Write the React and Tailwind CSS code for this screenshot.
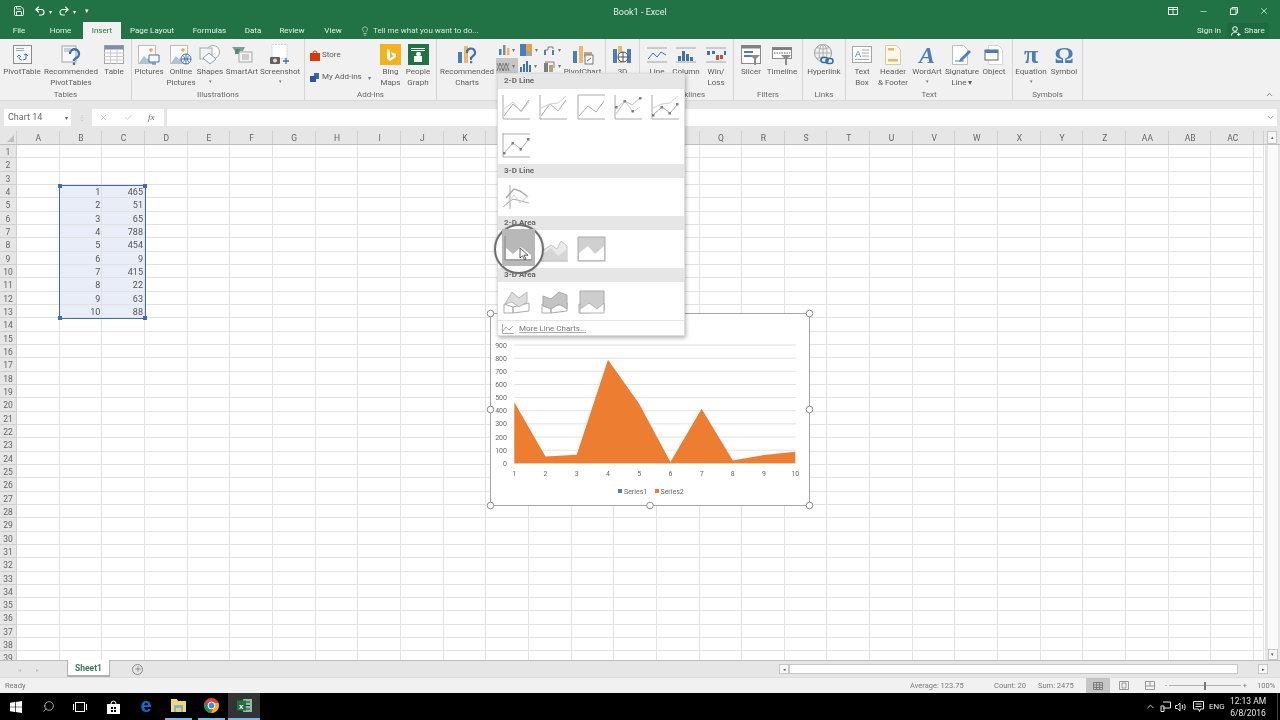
import { Save, Undo2, Redo2, Lightbulb, X, Check, ChevronUp, ChevronDown, Minus, Search, Plus } from "lucide-react";

const columns = ["A","B","C","D","E","F","G","H","I","J","K","L","M","N","O","P","Q","R","S","T","U","V","W","X","Y","Z","AA","AB","AC"];
const sheetData = { 4:[1,465], 5:[2,51], 6:[3,65], 7:[4,788], 8:[5,454], 9:[6,9], 10:[7,415], 11:[8,22], 12:[9,63], 13:[10,88] };
const chartValues = [465,51,65,788,454,9,415,22,63,88];

const Svg = ({ w = 24, h = 24, children }) => (
  <svg width={w} height={h} viewBox={`0 0 ${w} ${h}`} fill="none">{children}</svg>
);

// ribbon icons
const PivotIcon = () => (
  <Svg w={19} h={19}>
    <rect x="0.5" y="0.5" width="18" height="18" fill="#f7f7f7" stroke="#8c8c8c" />
    <path d="M3 3.500h8M3 5.500h8" stroke="#a6a6a6" />
    <path d="M9 15h-1a3 3 0 0 1-2-3M6 10l-2 2M6 10l2 2M10 15l3-1v-5l-2 1M13 9l2 2" stroke="#3b6fa8" />
  </Svg>
);
const RecPivotIcon = () => (
  <Svg w={20} h={20}>
    <rect x="1" y="1" width="14" height="16" fill="#f7f7f7" stroke="#a6a6a6" />
    <path d="M3 4h7M3 6h7" stroke="#a6a6a6" />
    <path d="M9 9a4.5 4.5 0 1 1 6 4l-2 2v1" stroke="#3f73ae" strokeWidth="2.4" />
    <rect x="11.8" y="17.5" width="2.4" height="2.4" fill="#3f73ae" />
  </Svg>
);
const TableIcon = () => (
  <Svg w={20} h={19}>
    <rect x="0.5" y="0.5" width="19" height="18" fill="#fbfbfb" stroke="#a6a6a6" />
    <rect x="0.5" y="0.5" width="19" height="4" fill="#7f8fa9" />
    <path d="M0 8h20M0 11.5h20M0 15h20M6.500 4v15M13 4v15" stroke="#c9c9c9" />
  </Svg>
);
const PictureIcon = ({ globe, monitor }) => (
  <Svg w={22} h={20}>
    <rect x="0.5" y="0.5" width="17" height="18" fill="#fbfbfb" stroke="#bdbdbd" />
    <circle cx="13" cy="5" r="1.8" fill="#eda64a" />
    <path d="M1 18l5-7 3 3 3-2 5 6z" fill="#a9c3de" />
    {monitor && <path d="M11 10h10v7H11zM14 19h4" stroke="#3f73ae" fill="#fff" />}
    {globe && (
      <g stroke="#3f73ae" fill="#fff">
        <circle cx="16" cy="14" r="5" />
        <path d="M11 14h10M16 9v10M13 10.500c2 2 2 5 0 7M19 10.500c-2 2-2 5 0 7" fill="none" />
      </g>
    )}
  </Svg>
);
const ShapesIcon = () => (
  <Svg w={22} h={20}>
    <circle cx="14" cy="7" r="6.5" fill="#fbfbfb" stroke="#a6a6a6" />
    <rect x="1" y="3" width="12" height="11" fill="#f2f2f2" stroke="#a6a6a6" />
    <path d="M10 8l7 6-6 5-7-6z" fill="#fff" stroke="#7d9cbd" />
  </Svg>
);
const SmartArtIcon = () => (
  <Svg w={22} h={18}>
    <path d="M1 1h13l-2 4H4z" fill="#7b9f95" />
    <path d="M4 3h5v5H4z" fill="#5d8478" />
    <rect x="8" y="6" width="13" height="10" fill="#f4f4f4" stroke="#a6a6a6" />
    <path d="M11 9h7M11 11h7M11 13h7" stroke="#a6a6a6" />
  </Svg>
);
const ScreenshotIcon = () => (
  <Svg w={22} h={22}>
    <rect x="3" y="0.5" width="15" height="14" fill="#fff" stroke="#d0d0d0" strokeDasharray="2 1" />
    <rect x="1" y="13" width="10" height="7" rx="1" fill="#5f5f5f" />
    <circle cx="6" cy="16.5" r="2" fill="#dcdcdc" />
    <path d="M17 14v6M14 17h6" stroke="#3f73ae" strokeWidth="1.3" />
  </Svg>
);
const RecChartIcon = () => (
  <Svg w={20} h={20}>
    <rect x="1" y="7" width="4" height="11" fill="#4a7ebb" />
    <rect x="7" y="1" width="4" height="17" fill="#eab96a" />
    <path d="M10 8a4 4 0 1 1 6 3l-2 2v2" stroke="#3f73ae" strokeWidth="2.2" />
    <rect x="13" y="16" width="2.2" height="2.2" fill="#3f73ae" />
  </Svg>
);
const PivotChartIcon = () => (
  <Svg w={22} h={22}>
    <rect x="1" y="7" width="4" height="12" fill="#4a7ebb" />
    <rect x="7" y="2" width="4" height="17" fill="#eab96a" />
    <rect x="12" y="8" width="8" height="5" fill="#b9a98c" />
    <rect x="13" y="11" width="8" height="9" fill="#f7f7f7" stroke="#7a7a7a" />
    <path d="M15 17l4-3" stroke="#3f73ae" />
  </Svg>
);
const MapIcon = () => (
  <Svg w={21} h={20}>
    <rect x="1" y="4" width="4" height="14" fill="#4a7ebb" />
    <rect x="6" y="1" width="4" height="17" fill="#eab96a" />
    <rect x="15" y="4" width="4" height="14" fill="#4a7ebb" />
    <circle cx="11" cy="12" r="5" fill="#fff" stroke="#4d4d4d" />
    <path d="M6 12h10M11 7v10" stroke="#4d4d4d" />
  </Svg>
);
const SparkIcon = ({ type }) => (
  <Svg w={20} h={16}>
    <path d="M0 1h20M0 15h20" stroke="#a6a6a6" />
    {type === "line" && <path d="M1 12l5-6 4 4 4-5 5 3" stroke="#3f73ae" />}
    {type === "column" && (
      <g fill="#3f73ae">
        <rect x="2" y="9" width="3" height="5" />
        <rect x="6" y="4" width="3" height="10" />
        <rect x="10" y="7" width="3" height="7" />
        <rect x="14" y="10" width="3" height="4" />
      </g>
    )}
    {type === "win" && (
      <g>
        <rect x="1" y="4" width="3" height="4" fill="#3f73ae" />
        <rect x="6" y="4" width="3" height="3" fill="#3f73ae" />
        <rect x="10" y="8" width="3" height="5" fill="#c0504d" />
        <rect x="14" y="8" width="3" height="4" fill="#c0504d" />
        <rect x="18" y="4" width="2" height="4" fill="#3f73ae" />
      </g>
    )}
  </Svg>
);
const SlicerIcon = () => (
  <Svg w={20} h={20}>
    <rect x="0.5" y="0.5" width="19" height="18" fill="#fff" stroke="#8c8c8c" />
    <rect x="0.5" y="0.5" width="19" height="3" fill="#7f7f7f" />
    <rect x="3" y="6" width="9" height="2" fill="#4a7ebb" />
    <rect x="3" y="10" width="9" height="2" fill="#4a7ebb" />
    <path d="M9 10h10l-4 4v6h-2v-6z" fill="#8c8c8c" />
  </Svg>
);
const TimelineIcon = () => (
  <Svg w={20} h={20}>
    <rect x="0.5" y="2.5" width="19" height="11" fill="#fff" stroke="#8c8c8c" />
    <rect x="0.5" y="2.5" width="19" height="2.5" fill="#7f7f7f" />
    <path d="M2 8h16" stroke="#555" strokeDasharray="1.5 1" />
    <path d="M9 10h10l-4 4v6h-2v-6z" fill="#8c8c8c" />
  </Svg>
);
const HyperlinkIcon = () => (
  <Svg w={22} h={22}>
    <circle cx="10" cy="9" r="8.5" stroke="#9a9a9a" />
    <path d="M1.500 9h17M10 .5v17M4 3.500c4 2 8 2 12 0M4 14.500c4-2 8-2 12 0" stroke="#b0b0b0" />
    <ellipse cx="10" cy="9" rx="4" ry="8.5" stroke="#b0b0b0" />
    <rect x="8" y="13.5" width="7" height="5" rx="2.5" stroke="#2f6db0" strokeWidth="1.5" fill="#f1f1f1" />
    <rect x="13" y="14.5" width="7" height="5" rx="2.5" stroke="#2f6db0" strokeWidth="1.5" />
  </Svg>
);
const TextBoxIcon = () => (
  <Svg w={20} h={18}>
    <rect x="0.5" y="0.5" width="19" height="16" fill="#fff" stroke="#a6a6a6" />
    <text x="3" y="11" fontSize="9" fontFamily="Liberation Sans, sans-serif" fill="#3f73ae">A</text>
    <path d="M10 4h7M10 7h7M10 10h7M3 13.500h14" stroke="#a6a6a6" />
  </Svg>
);
const HeaderIcon = () => (
  <Svg w={16} h={20}>
    <path d="M.5.500h11l4 4v15H.5z" fill="#fdf8ea" stroke="#d8c9a3" />
    <rect x="3" y="3" width="6" height="2.5" fill="#e8b662" />
    <rect x="3" y="14" width="10" height="2.5" fill="#e8b662" />
  </Svg>
);
const SignatureIcon = () => (
  <Svg w={20} h={20}>
    <path d="M.5.500h11l4 4v15H.5z" fill="#fff" stroke="#bdbdbd" />
    <path d="M3 16h9" stroke="#5d7fa8" />
    <path d="M8 14l9-9 2 2-9 9-3 1z" fill="#4f7fb5" />
  </Svg>
);
const ObjectIcon = () => (
  <Svg w={20} h={20}>
    <path d="M4.500.500h10l4 4v15h-14z" fill="#fff" stroke="#d5d5d5" />
    <rect x="1" y="5" width="13" height="10" fill="#fff" stroke="#666" />
    <rect x="1" y="5" width="13" height="3" fill="#4a7ebb" />
  </Svg>
);

const RibbonBtn = ({ className, icon, label, second, arrow }) => (
  <div className={`${className} flex flex-col items-center shrink-0`}>
    <div className="h-[25px] flex items-center justify-center">{icon}</div>
    <div className="text-center whitespace-nowrap leading-[10.5px]">{label}</div>
    {second && <div className="text-center whitespace-nowrap leading-[10.5px]">{second}</div>}
    {arrow && <div className="text-[5px] leading-[7px] text-[#777]">▾</div>}
  </div>
);

const Group = ({ className, label, children }) => (
  <div className={`${className} h-full shrink-0 flex flex-col border-r border-[#d6d6d6]`}>
    <div className="h-[51px] flex pt-[3px]">{children}</div>
    <div className="text-center text-[8px] leading-[10px] text-[#6a6a6a] whitespace-nowrap">{label}</div>
  </div>
);

const Caret = () => <span className="text-[6px] text-[#777] leading-none ml-[2px]">▾</span>;

function MiniCharts() {
  return (
    <div className="w-[68px] shrink-0 grid grid-cols-3 grid-rows-2 h-[32px] gap-x-[2px]">
      <div className="flex items-center pl-[2px]">
        <Svg w={11} h={10}><rect x="0" y="4" width="2.5" height="6" fill="#4a7ebb" /><rect x="4" y="0" width="2.5" height="10" fill="#8c8c8c" /><rect x="8" y="3" width="2.5" height="7" fill="#eab96a" /></Svg><Caret />
      </div>
      <div className="flex items-center">
        <Svg w={13} h={12}><rect x="0" y="0" width="6" height="12" fill="#4a7ebb" /><rect x="6" y="0" width="6" height="7" fill="#e8a33d" /><rect x="6" y="7" width="6" height="5" fill="#a6a6a6" /></Svg><Caret />
      </div>
      <div className="flex items-center">
        <Svg w={12} h={11}><path d="M1 10V5h3V2h5v2" stroke="#7f7f7f" /><path d="M9 5v5" stroke="#4a7ebb" strokeWidth="2" /><rect x="0" y="5" width="2" height="5" fill="#4a7ebb" /></Svg><Caret />
      </div>
      <div className="flex items-center bg-[#c6c6c6] -ml-[1px] w-[22px]">
        <Svg w={14} h={12}><path d="M1 11l3-8 3 8 3-8 3 8" stroke="#6f6f6f" /><path d="M1 3l3 8 3-8 3 8 3-8" stroke="#8c8c8c" /></Svg><Caret />
      </div>
      <div className="flex items-center">
        <Svg w={12} h={11}><rect x="0" y="6" width="2" height="5" fill="#3f73ae" /><rect x="3" y="3" width="2" height="8" fill="#3f73ae" /><rect x="6" y="0" width="2" height="11" fill="#3f73ae" /><rect x="9" y="4" width="2" height="7" fill="#3f73ae" /></Svg><Caret />
      </div>
      <div className="flex items-center">
        <Svg w={12} h={12}><rect x="0" y="3" width="4" height="9" fill="#7f7f7f" /><rect x="5" y="5" width="4" height="7" fill="#b3a27d" /><path d="M1 2h9v6" stroke="#7f7f7f" /></Svg><Caret />
      </div>
    </div>
  );
}

function TitleBar() {
  return (
    <div className="h-[22px] shrink-0 bg-[#217346] flex items-center text-white relative">
      <Save size={12} className="ml-[13px]" strokeWidth={1.8} />
      <Undo2 size={12} className="ml-[9px]" strokeWidth={2.2} />
      <span className="text-[6px] ml-[3px]">▾</span>
      <Redo2 size={12} className="ml-[6px] opacity-90" strokeWidth={2.2} />
      <span className="text-[6px] ml-[3px]">▾</span>
      <span className="text-[7px] ml-[9px] leading-none">▾</span>
      <div className="absolute inset-x-0 top-[6px] text-center text-[9px] leading-[12px] text-[#e4efe9]">Book1 - Excel</div>
      <div className="flex-1" />
      <svg width="10" height="8" viewBox="0 0 10 8" className="mr-[21px]" fill="none"><rect x=".5" y=".5" width="9" height="7" stroke="#e6f0ea" /><path d="M5 1v6M.5 2.500h9" stroke="#e6f0ea" /></svg>
      <Minus size={9} className="mr-[22px] text-[#cfe2d7]" />
      <svg width="8" height="8" viewBox="0 0 8 8" className="mr-[21px]" fill="none"><rect x=".5" y="2" width="5.5" height="5.5" stroke="#e6f0ea" /><path d="M2 2V.5h5.500V6H6" stroke="#e6f0ea" /></svg>
      <X size={10} className="mr-[11px] text-[#cfe2d7]" />
    </div>
  );
}

function Tabs() {
  return (
    <div className="h-[17px] shrink-0 bg-[#217346] flex items-stretch text-[8px] text-[#e6f0ea]">
      <div className="w-[38px] flex items-center justify-center pt-[1px]">File</div>
      <div className="w-[45px] flex items-center justify-center pt-[1px]">Home</div>
      <div className="w-[38px] flex items-center justify-center pt-[1px] bg-[#f1f1f1] text-[#217346]">Insert</div>
      <div className="w-[62px] flex items-center justify-center pt-[1px]">Page Layout</div>
      <div className="w-[53px] flex items-center justify-center pt-[1px]">Formulas</div>
      <div className="w-[34px] flex items-center justify-center pt-[1px]">Data</div>
      <div className="w-[44px] flex items-center justify-center pt-[1px]">Review</div>
      <div className="w-[38px] flex items-center justify-center pt-[1px]">View</div>
      <div className="flex items-center ml-[8px] pt-[1px] text-[#d7e6dd]">
        <Lightbulb size={10} strokeWidth={1.5} />
        <span className="ml-[3px]">Tell me what you want to do...</span>
      </div>
      <div className="flex-1" />
      <div className="flex items-center pr-[6px] pt-[1px]">Sign in</div>
      <div className="w-[42px] mr-[11px] flex items-center justify-center bg-[#1e6b40] my-[1px]">
        <svg width="10" height="10" viewBox="0 0 10 10" fill="none" stroke="#fff"><circle cx="4" cy="3" r="2.3" /><path d="M.5 9.500c0-2 1.500-3.500 3.500-3.500s2 .5 2.500 1M6 8.500h3.500M7.700 6.800v3.400" /></svg>
        <span className="ml-[3px]">Share</span>
      </div>
    </div>
  );
}

function Ribbon() {
  return (
    <div className="h-[62px] shrink-0 bg-[#f1f1f1] border-b border-[#d9d9d9] flex text-[8px] text-[#5c5c5c] relative">
      <Group className="w-[132px]" label="Tables">
        <div className="w-[2px]" />
        <RibbonBtn className="w-[40px]" icon={<PivotIcon />} label="PivotTable" />
        <RibbonBtn className="w-[58px]" icon={<RecPivotIcon />} label="Recommended" second="PivotTables" />
        <RibbonBtn className="w-[28px]" icon={<TableIcon />} label="Table" />
      </Group>
      <Group className="w-[173px]" label="Illustrations">
        <div className="w-[1px]" />
        <RibbonBtn className="w-[32px]" icon={<PictureIcon monitor />} label="Pictures" />
        <RibbonBtn className="w-[32px]" icon={<PictureIcon globe />} label="Online" second="Pictures" />
        <RibbonBtn className="w-[26px]" icon={<ShapesIcon />} label="Shapes" arrow />
        <RibbonBtn className="w-[38px]" icon={<SmartArtIcon />} label="SmartArt" />
        <RibbonBtn className="w-[38px]" icon={<ScreenshotIcon />} label="Screenshot" arrow />
      </Group>
      <Group className="w-[132px]" label="Add-ins">
        <div className="w-[73px] shrink-0 flex flex-col pl-[5px] pt-[7px] gap-[10px] text-[8px]">
          <div className="flex items-center">
            <svg width="10" height="11" viewBox="0 0 10 11"><rect y="3" width="10" height="8" fill="#d83b01" /><path d="M3 3a2 2 0 0 1 4 0" stroke="#d83b01" fill="none" /></svg>
            <span className="ml-[2px]">Store</span>
          </div>
          <div className="flex items-center">
            <svg width="10" height="10" viewBox="0 0 10 10"><path d="M0 4h6v6H0z" fill="#2b579a" /><path d="M4 1h5v6H6V4H4z" fill="#2f6db0" /></svg>
            <span className="ml-[2px]">My Add-ins</span>
            <span className="ml-[6px] text-[6px] text-[#777]">▾</span>
          </div>
        </div>
        <RibbonBtn className="w-[25px]" icon={<div className="w-[21px] h-[21px] bg-[#f4b21d] flex items-center justify-center"><svg width="10" height="14" viewBox="0 0 10 14"><path d="M1 1l3 1v8l4-2-2-1-1-3 5 2v3l-6 4-3-2z" fill="#fff" /></svg></div>} label="Bing" second="Maps" />
        <RibbonBtn className="w-[30px]" icon={<div className="w-[21px] h-[21px] bg-[#217346] flex flex-col items-center justify-center"><div className="w-[14px] h-[1px] bg-white mb-[1px]" /><div className="w-[14px] h-[1px] bg-white mb-[1px]" /><div className="w-[5px] h-[4px] rounded-full bg-white" /><div className="w-[8px] h-[6px] bg-white" /></div>} label="People" second="Graph" />
      </Group>
      <Group className="w-[169px]" label="Charts">
        <RibbonBtn className="w-[60px]" icon={<RecChartIcon />} label="Recommended" second="Charts" />
        <MiniCharts />
        <RibbonBtn className="w-[35px]" icon={<PivotChartIcon />} label="PivotChart" arrow />
      </Group>
      <Group className="w-[34px]" label="Tours">
        <RibbonBtn className="w-[33px]" icon={<MapIcon />} label="3D" second="Map" />
      </Group>
      <Group className="w-[94px]" label="Sparklines">
        <div className="w-[3px]" />
        <RibbonBtn className="w-[28px]" icon={<SparkIcon type="line" />} label="Line" />
        <RibbonBtn className="w-[30px]" icon={<SparkIcon type="column" />} label="Column" />
        <RibbonBtn className="w-[30px]" icon={<SparkIcon type="win" />} label="Win/" second="Loss" />
      </Group>
      <Group className="w-[69px]" label="Filters">
        <div className="w-[1px]" />
        <RibbonBtn className="w-[32px]" icon={<SlicerIcon />} label="Slicer" />
        <RibbonBtn className="w-[30px]" icon={<TimelineIcon />} label="Timeline" />
      </Group>
      <Group className="w-[43px]" label="Links">
        <RibbonBtn className="w-[42px]" icon={<HyperlinkIcon />} label="Hyperlink" />
      </Group>
      <Group className="w-[167px]" label="Text">
        <div className="w-[2px]" />
        <RibbonBtn className="w-[28px]" icon={<TextBoxIcon />} label="Text" second="Box" />
        <RibbonBtn className="w-[34px]" icon={<HeaderIcon />} label="Header" second="& Footer" />
        <RibbonBtn className="w-[34px]" icon={<span className="text-[24px] leading-none italic font-bold text-[#4a7ebb] [font-family:'Liberation_Serif',serif]">A</span>} label="WordArt" arrow />
        <RibbonBtn className="w-[36px]" icon={<SignatureIcon />} label="Signature" second="Line ▾" />
        <RibbonBtn className="w-[28px]" icon={<ObjectIcon />} label="Object" />
      </Group>
      <Group className="w-[70px]" label="Symbols">
        <div className="w-[1px]" />
        <RibbonBtn className="w-[34px]" icon={<span className="text-[26px] leading-none font-bold text-[#4a7ebb] [font-family:'Liberation_Serif',serif]">π</span>} label="Equation" arrow />
        <RibbonBtn className="w-[32px]" icon={<span className="text-[24px] leading-none font-bold text-[#4a7ebb] [font-family:'Liberation_Serif',serif]">Ω</span>} label="Symbol" />
      </Group>
      <ChevronUp size={9} className="absolute right-[6px] bottom-[1px] text-[#666]" />
    </div>
  );
}

function FormulaBar() {
  return (
    <div className="h-[30px] shrink-0 bg-[#e6e6e6] flex items-center text-[9px] text-[#666] pt-[3px]">
      <div className="w-[67px] h-[17px] ml-[4px] bg-white flex items-center pl-[4px] justify-between pr-[3px]">
        Chart 14
        <span className="text-[6px]">▾</span>
      </div>
      <div className="w-[21px] text-center text-[#bbb] text-[8px]">⋮</div>
      <div className="w-[72px] h-[17px] bg-white flex items-center text-[#bdbdbd]">
        <X size={9} className="ml-[7px]" />
        <Check size={9} className="ml-[16px]" />
        <span className="ml-[15px] italic text-[#666] [font-family:'Liberation_Serif',serif]">fx</span>
      </div>
      <div className="flex-1 h-[17px] ml-[3px] mr-[3px] bg-white flex items-center justify-end pr-[2px]">
        <ChevronDown size={9} className="text-[#777]" />
      </div>
    </div>
  );
}

function ColumnHeaders() {
  return (
    <div className="h-[14px] shrink-0 flex bg-[#e6e6e6] border-b border-[#bfbfbf] text-[8.5px] text-[#666] leading-[15px]">
      <div className="w-[17px] shrink-0 border-r border-[#cfcfcf] relative">
        <div className="absolute right-[2px] bottom-[2px] w-0 h-0 border-l-[7px] border-l-transparent border-b-[7px] border-b-[#bfbfbf]" />
      </div>
      {columns.map((c) => (
        <div key={c} className="w-[42.67px] shrink-0 text-center pl-[1px] border-r border-[#cfcfcf]">{c}</div>
      ))}
      <div className="w-[10px] shrink-0 border-r border-[#cfcfcf]" />
      <div className="flex-1 bg-[#e6e6e6] flex justify-center">
        <div className="w-[10px] h-[13px] bg-[#f7f7f7] border border-[#c6c6c6] text-[5px] text-center leading-[11px]">▴</div>
      </div>
    </div>
  );
}

function Grid() {
  const rows = Array.from({ length: 39 }, (_, i) => i + 1);
  return (
    <div className="flex-1 min-h-0 flex overflow-hidden">
      <div className="relative overflow-hidden w-[1265px] shrink-0 bg-white">
        {rows.map((r) => (
          <div key={r} className="h-[13.33px] flex text-[9px] text-[#555] leading-[14.5px]">
            <div className="w-[17px] shrink-0 bg-[#e6e6e6] border-r border-b border-[#cfcfcf] text-center text-[8.5px] text-[#666]">{r}</div>
            {columns.map((c) => (
              <div
                key={c}
                className={`w-[42.67px] shrink-0 border-r border-b border-[#e2e2e2] text-right pr-[1px] ${sheetData[r] && (c === "B" || c === "C") ? "bg-[#e9edf7]" : ""}`}
              >
                {sheetData[r] && c === "B" && sheetData[r][0]}
                {sheetData[r] && c === "C" && sheetData[r][1]}
              </div>
            ))}
            <div className="w-[10px] shrink-0 border-r border-b border-[#e2e2e2]" />
          </div>
        ))}
        {/* chart source range */}
        <div className="absolute left-[59px] top-[40px] w-[86.5px] h-[133.5px] border-[1.5px] border-[#3f6cb0]">
          <div className="absolute -left-[2.5px] -top-[2.5px] w-[4px] h-[4px] bg-[#3f6cb0]" />
          <div className="absolute -right-[2.5px] -top-[2.5px] w-[4px] h-[4px] bg-[#3f6cb0]" />
          <div className="absolute -left-[2.5px] -bottom-[2.5px] w-[4px] h-[4px] bg-[#3f6cb0]" />
          <div className="absolute -right-[2.5px] -bottom-[2.5px] w-[4px] h-[4px] bg-[#3f6cb0]" />
        </div>
      </div>
      <div className="flex-1 bg-[#e6e6e6] flex flex-col items-center">
        <div className="w-[10px] flex-1 bg-[#fbfbfb]" />
        <div className="w-[10px] h-[11px] bg-[#f7f7f7] border border-[#c6c6c6] text-[5px] text-center leading-[9px] text-[#555]">▾</div>
      </div>
    </div>
  );
}

function ChartObject() {
  const x = (i) => 24.3 + i * 31.22;
  const y = (v) => 150.3 - v * 0.1314;
  const points = chartValues.map((v, i) => `${x(i)},${y(v)}`).join(" ");
  const ticks = [0, 100, 200, 300, 400, 500, 600, 700, 800, 900];
  const handles = [[0, 0], [319, 0], [0, 96], [319, 96], [0, 192], [159.5, 192], [319, 192]];
  return (
    <div className="absolute left-[490px] top-[313px] w-[320px] h-[193px]">
      <svg width="320" height="193" viewBox="0 0 320 193" className="absolute inset-0 overflow-visible">
        <rect x="0.5" y="0.5" width="319" height="192" fill="#fff" stroke="#a6a6a6" />
        {ticks.map((t) => (
          <g key={t}>
            <line x1="24" x2="306" y1={y(t)} y2={y(t)} stroke="#e2e2e2" />
            <text x="17" y={y(t) + 2.5} textAnchor="end" fontSize="7" fill="#666" fontFamily="Roboto, sans-serif">{t}</text>
          </g>
        ))}
        <polygon points={`${x(0)},${y(0)} ${points} ${x(9)},${y(0)}`} fill="#ed7d31" />
        {chartValues.map((_, i) => (
          <text key={i} x={x(i)} y="162.5" textAnchor="middle" fontSize="7" fill="#666" fontFamily="Roboto, sans-serif">{i + 1}</text>
        ))}
        <rect x="128" y="176" width="4" height="4" fill="#5b7fa8" />
        <text x="134" y="180.5" fontSize="7" fill="#666" fontFamily="Roboto, sans-serif">Series1</text>
        <rect x="165" y="176" width="4" height="4" fill="#ed7d31" />
        <text x="170.5" y="180.5" fontSize="7" fill="#666" fontFamily="Roboto, sans-serif">Series2</text>
        {handles.map(([hx, hy]) => (
          <circle key={`${hx}-${hy}`} cx={hx + 0.5} cy={hy + 0.5} r="3.3" fill="#fff" stroke="#8c8c8c" />
        ))}
      </svg>
    </div>
  );
}

const Axis = () => <path d="M1 1v24h27" stroke="#ababab" />;
const LINE_A = "M2 22l9-12 8 7 8-11";
const LINE_B = "M2 14l9 -4 8 -1 8 -7";

const lineIcons = [
  <><Axis /><path d="M2 22l9-12 8 7 8-11" stroke="#ababab" /><path d="M2 15l9-7 8 10 8-10" stroke="#cfcfcf" /></>,
  <><Axis /><path d={LINE_A} stroke="#ababab" /><path d={LINE_B} stroke="#cfcfcf" /></>,
  <><path d="M1 1h27" stroke="#ababab" /><Axis /><path d="M2 22l9-10 8 6 8-11" stroke="#ababab" /></>,
  <><Axis /><path d="M2 20l9-13 7 4 8-7" stroke="#bbb" /><path d="M2 14l9 -7 8 11 7-5" stroke="#cfcfcf" /><g fill="#808080"><rect x="1" y="12" width="2.5" height="2.5" /><rect x="9.5" y="6" width="2.5" height="2.5" /><rect x="17.5" y="16" width="2.5" height="2.5" /><rect x="25" y="3" width="2.5" height="2.5" /></g></>,
  <><Axis /><path d={LINE_B} stroke="#cfcfcf" /><path d="M2 21l9-8 8 6 8-9" stroke="#ababab" /><g fill="#808080"><rect x="1" y="20" width="2.5" height="2.5" /><rect x="9.5" y="12" width="2.5" height="2.5" /><rect x="17.5" y="18" width="2.5" height="2.5" /><rect x="25" y="9" width="2.5" height="2.5" /></g></>,
];
const markerTop = (
  <><path d="M1 2h27" stroke="#ababab" /><Axis /><path d="M2 21l9-10 8 6 8-10" stroke="#ababab" /><g fill="#808080"><rect x="1" y="20" width="2.5" height="2.5" /><rect x="9.5" y="10" width="2.5" height="2.5" /><rect x="17.5" y="16" width="2.5" height="2.5" /><rect x="25" y="6" width="2.5" height="2.5" /></g></>
);
const line3d = (
  <><path d="M8 1v24M1 23l10-8 16 4" stroke="#ababab" /><path d="M4 14l8-9 6 2 8 6" stroke="#ababab" strokeWidth="1.5" /><path d="M4 20l8-9 6 8 8-7" stroke="#cfcfcf" /></>
);
const area1 = (
  <><path d="M1 1v24h27" stroke="#8a8a8a" /><path d="M2 24V13l7 6 8-7 10 8v4z" fill="#fff" /></>
);
const area2 = (
  <><path d="M1 25h27M1 1v24" stroke="#ababab" /><path d="M2 24V15l9-6 6 4 4-8 6 5v14z" fill="#eaeaea" stroke="#c4c4c4" /><path d="M2 24v-5l9-7 7 8 9-7v11z" fill="#d6d6d6" /></>
);
const area3 = (
  <><path d="M1 1h27v24H1z" fill="#d0d0d0" stroke="#ababab" /><path d="M2 24V17l9-7 7 8 9-8v14z" fill="#fff" /></>
);
const area3d = (n) => (
  <>
    <path d="M2 25V16l9 3v6zM11 25V19l16-4v8z" fill="#fff" stroke="#ababab" />
    {n === 0 && <path d="M3 16l7-12 7 6 8-6v10l-8 5-7-5z" fill="#dcdcdc" stroke="#b5b5b5" />}
    {n === 1 && <path d="M3 8l8 3 8-7 8 3v14l-8-5-8 5-8-3z" fill="#c4c4c4" stroke="#ababab" />}
    {n === 2 && <><path d="M3 3h24v18H3z" fill="#cdcdcd" stroke="#ababab" /><path d="M3 21l9-6 8 6 7-6v10H3z" fill="#fff" stroke="#b5b5b5" /></>}
  </>
);

const ChartIcon = ({ children }) => (
  <div className="w-[37.5px] h-full flex items-center justify-center">
    <svg width="29" height="26" viewBox="0 0 29 26" fill="none">{children}</svg>
  </div>
);
const DropHeader = ({ children }) => (
  <div className="h-[14.5px] bg-[#e6e6e6] pl-[6px] text-[8px] font-bold text-[#6a6a6a] leading-[14px]">{children}</div>
);

function LineDropdown() {
  return (
    <div className="absolute left-[497px] top-[73px] w-[188px] h-[263px] bg-white shadow-[1px_2px_4px_rgba(0,0,0,0.3)] border border-[#dcdcdc]">
      <DropHeader>2-D Line</DropHeader>
      <div className="h-[37.5px] flex">{lineIcons.map((ic, i) => <ChartIcon key={i}>{ic}</ChartIcon>)}</div>
      <div className="h-[37.5px] flex"><ChartIcon>{markerTop}</ChartIcon></div>
      <DropHeader>3-D Line</DropHeader>
      <div className="h-[37.5px] flex"><ChartIcon>{line3d}</ChartIcon></div>
      <DropHeader>2-D Area</DropHeader>
      <div className="h-[37.5px] flex">
        <ChartIcon />
        <ChartIcon>{area2}</ChartIcon>
        <ChartIcon>{area3}</ChartIcon>
      </div>
      <DropHeader>3-D Area</DropHeader>
      <div className="h-[37.5px] flex">
        <ChartIcon>{area3d(0)}</ChartIcon>
        <ChartIcon>{area3d(1)}</ChartIcon>
        <ChartIcon>{area3d(2)}</ChartIcon>
      </div>
      <div className="h-[17px] border-t border-[#e6e6e6] flex items-center pl-[4px] text-[8px] text-[#777]">
        <svg width="12" height="10" viewBox="0 0 12 10" fill="none"><path d="M.5 0v9.500H12" stroke="#aaa" /><path d="M1 7l3-4 3 3 4-4" stroke="#aaa" /></svg>
        <span className="ml-[5px] underline decoration-[#aaa]">More Line Charts...</span>
      </div>
      {/* click highlight from the screen recorder */}
      <div className="absolute left-[-4px] top-[150px] w-[50px] h-[50px] rounded-full border-2 border-[#6e6e6e] bg-white/85 shadow-[0_0_2px_rgba(0,0,0,0.3)]" />
      <div className="absolute left-[4px] top-[155px] w-[33px] h-[37px] bg-[#b8b8b8] flex items-center justify-center">
        <svg width="29" height="26" viewBox="0 0 29 26" fill="none">{area1}</svg>
      </div>
      <svg width="11" height="14" viewBox="0 0 11 14" className="absolute left-[21px] top-[173px]">
        <path d="M1 1v10l2.500-2.200 2 4 1.500-.8-2-3.800H9z" fill="#fff" stroke="#333" strokeWidth="0.8" />
      </svg>
    </div>
  );
}

function SheetTabs() {
  return (
    <div className="h-[17px] shrink-0 bg-[#e6e6e6] border-t border-[#bdbdbd] flex text-[8px] text-[#9a9a9a] items-stretch">
      <div className="w-[67px] flex items-center pl-[18px] gap-[15px] text-[6px] text-[#c0c0c0]"><span>◂</span><span>▸</span></div>
      <div className="w-[43px] bg-white border-x border-b-2 border-[#b5b5b5] border-b-[#b0b0b0] -mt-[1px] text-center text-[8.5px] font-bold text-[#3a7a58] leading-[17px]">Sheet1</div>
      <div className="ml-[22px] flex items-center">
        <div className="w-[11px] h-[11px] rounded-full border border-[#888] flex items-center justify-center"><Plus size={8} className="text-[#666]" /></div>
      </div>
      <div className="ml-[636px] w-[10px] my-[3px] bg-[#f7f7f7] border border-[#c6c6c6] text-[5px] text-center leading-[9px] text-[#555]">◂</div>
      <div className="w-[449px] my-[3px] bg-white border border-[#c6c6c6]" />
      <div className="flex-1" />
      <div className="w-[10px] mr-[12px] my-[3px] bg-[#f7f7f7] border border-[#c6c6c6] text-[5px] text-center leading-[9px] text-[#555]">▸</div>
    </div>
  );
}

function StatusBar() {
  return (
    <div className="h-[16px] shrink-0 bg-[#f1f1f1] border-t border-[#dcdcdc] flex items-center text-[7.5px] text-[#7a7a7a]">
      <span className="ml-[5px] w-[26px]">Ready</span>
      <span className="ml-[879px] w-[84px]">Average: 123.75</span>
      <span className="w-[44px]">Count: 20</span>
      <span className="w-[48px]">Sum: 2475</span>
      <div className="w-[24px] h-full bg-[#c6c6c6] flex items-center justify-center">
        <svg width="10" height="8" viewBox="0 0 10 8" fill="none"><path d="M.5.500h9v7h-9zM3.500.500v7M6.500.500v7M.5 3h9M.5 5.500h9" stroke="#7d7d7d" /></svg>
      </div>
      <div className="w-[27px] flex items-center justify-center">
        <svg width="10" height="9" viewBox="0 0 10 9" fill="none"><path d="M.5.500h9v8h-9z" stroke="#999" /><path d="M3 2h4v5H3z" stroke="#999" /></svg>
      </div>
      <div className="w-[26px] flex items-center justify-center">
        <svg width="10" height="9" viewBox="0 0 10 9" fill="none"><path d="M.5.500h9v8h-9zM.5 5h9M5 .5V5" stroke="#999" /></svg>
      </div>
      <div className="ml-[2px] w-[82px] flex items-center relative">
        <span className="text-[#777]">-</span>
        <div className="flex-1 h-[1px] bg-[#b0b0b0] mx-[2px]" />
        <span className="text-[#777]">+</span>
        <div className="absolute left-[39px] top-1/2 -translate-y-1/2 w-[2px] h-[8px] bg-[#777]" />
      </div>
      <span className="ml-[10px]">100%</span>
    </div>
  );
}

function Taskbar() {
  return (
    <div className="h-[27px] shrink-0 bg-black flex items-center text-[#e6e6e6]">
      <div className="w-[32px] flex justify-center">
        <svg width="12" height="12" viewBox="0 0 12 12" fill="#fff"><path d="M0 1.700l5-.7v4.700H0zM5.700.900L12 0v5.700H5.700zM0 6.300h5V11l-5-.7zM5.700 6.300H12V12l-6.300-.9z" /></svg>
      </div>
      <div className="w-[32px] flex justify-center"><Search size={13} className="-scale-x-100" strokeWidth={1.3} /></div>
      <div className="w-[32px] flex justify-center">
        <svg width="14" height="10" viewBox="0 0 14 10" fill="none" stroke="#fff"><rect x="2.5" y=".5" width="9" height="9" /><path d="M.5 2v6M13.500 2v6" /></svg>
      </div>
      <div className="w-[34px] flex justify-center">
        <svg width="13" height="14" viewBox="0 0 13 14"><path d="M0 4h13v10H0z" fill="#fff" /><path d="M4 4a2.500 3 0 0 1 5 0" stroke="#fff" fill="none" /><path d="M4 7h2v2H4zM7 7h2v2H7zM4 10h2v2H4zM7 10h2v2H7z" fill="#000" /></svg>
      </div>
      <div className="w-[32px] flex justify-center">
        <span className="text-[20px] leading-none font-bold text-[#0f6fd1] [font-family:'Liberation_Sans',sans-serif] -mt-[4px]">e</span>
      </div>
      <div className="w-[27px] ml-[3px] flex justify-center h-full items-center border-b-2 border-[#76b9ed]">
        <svg width="15" height="13" viewBox="0 0 15 13"><path d="M0 0h6l1 2h8v11H0z" fill="#f3d774" /><path d="M3 6h9v7H3z" fill="#7fb6c9" /><path d="M5 9h5v4H5z" fill="#e8cf7a" /></svg>
      </div>
      <div className="w-[27px] ml-[6px] flex justify-center h-full items-center border-b-2 border-[#76b9ed]">
        <svg width="15" height="15" viewBox="0 0 15 15"><circle cx="7.5" cy="7.5" r="7.5" fill="#db4437" /><path d="M7.500 15A7.500 7.500 0 0 1 1 3.800L4.500 9.500 7.500 15z" fill="#0f9d58" /><path d="M14.500 5H7.500l3 3-3.500 7a7.500 7.500 0 0 0 7.500-10z" fill="#f4b400" /><circle cx="7.5" cy="7.5" r="3.4" fill="#4285f4" stroke="#fff" /></svg>
      </div>
      <div className="w-[32px] ml-[3px] flex justify-center h-full items-center bg-[#333] border-b-2 border-[#76b9ed]">
        <svg width="15" height="13" viewBox="0 0 15 13"><rect width="9" height="13" x="6" fill="#8fbfa3" /><path d="M8 3h5M8 6.500h5M8 10h5" stroke="#333" /><rect y="1.5" width="9" height="10" fill="#217346" /><text x="2" y="9.5" fontSize="8" fontWeight="bold" fill="#fff" fontFamily="Liberation Sans, sans-serif">x</text></svg>
      </div>
      <div className="flex-1" />
      <ChevronUp size={11} className="mr-[4px]" />
      <svg width="11" height="11" viewBox="0 0 11 11" fill="none" stroke="#e6e6e6" className="mr-[4px]"><path d="M3 1h7.500v6H3M1 5h3v5.500H1z" /></svg>
      <svg width="11" height="10" viewBox="0 0 11 10" fill="none" stroke="#e6e6e6" className="mr-[7px]"><path d="M.5 3.500h2l2.500-2.500v8L2.500 6.500h-2zM7 3c1 1 1 3 0 4M9 2c1.500 1.500 1.500 4.500 0 6" /></svg>
      <svg width="11" height="11" viewBox="0 0 11 11" fill="none" stroke="#e6e6e6" className="mr-[5px]"><path d="M.5.500h10v7.500h-3l-1 2.500-1-2.500h-5zM2.500 3h6M2.500 5.500h6" /></svg>
      <span className="text-[8px] mr-[3px] w-[16px]">ENG</span>
      <div className="w-[40px] text-center text-[8.5px] leading-[12px] mr-[9px]">
        <div>12:13 AM</div>
        <div>6/8/2016</div>
      </div>
      <div className="w-[1px] h-full bg-[#444] mr-[2px]" />
    </div>
  );
}

export default function App() {
  return (
    <div className="w-[1280px] h-[720px] relative overflow-hidden flex flex-col bg-white blur-[0.35px] [font-family:Roboto,'Liberation_Sans',sans-serif]">
      <TitleBar />
      <Tabs />
      <Ribbon />
      <FormulaBar />
      <ColumnHeaders />
      <Grid />
      <SheetTabs />
      <StatusBar />
      <Taskbar />
      <ChartObject />
      <LineDropdown />
    </div>
  );
}
